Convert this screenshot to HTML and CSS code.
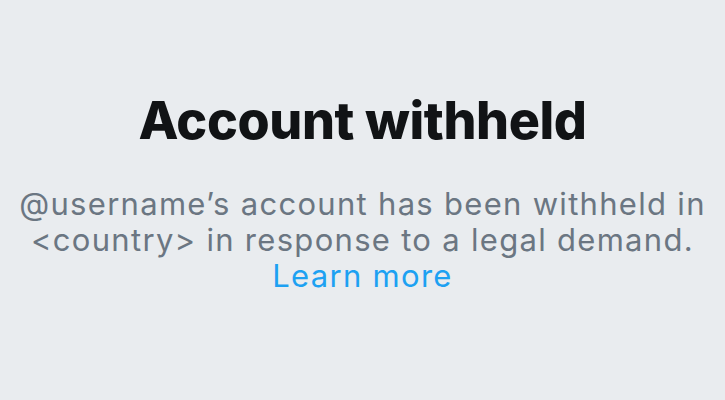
FILE: index.html
```html
<!DOCTYPE html>
<html>
<head>
<meta charset="utf-8">
<link rel="stylesheet" href="styles.css">
</head>
<body>
<main class="page">
  <h1 class="title">Account withheld</h1>
  <p class="desc">@username’s account has been withheld in<br>&lt;country&gt; in response to a legal demand.<br><a class="link" href="#">Learn more</a></p>
</main>
</body>
</html>
```
FILE: styles.css
```css
html, body {
  margin: 0;
  padding: 0;
  background: #e9ecef;
}
.page {
  width: 725px;
  height: 400px;
  display: flex;
  flex-direction: column;
  align-items: center;
  padding-top: 88px;
  box-sizing: border-box;
  font-family: Inter, "Noto Sans", sans-serif;
}
.title {
  margin: 0;
  font-size: 52px;
  font-weight: 800;
  letter-spacing: -0.4px;
  color: #111315;
  line-height: 66px;
}
.desc {
  margin: 32px 0 0;
  font-size: 31px;
  line-height: 36px;
  letter-spacing: 1.3px;
  color: #6b7682;
  text-align: center;
  font-weight: 400;
}
.link {
  color: #1da1f2;
  text-decoration: none;
}
```
